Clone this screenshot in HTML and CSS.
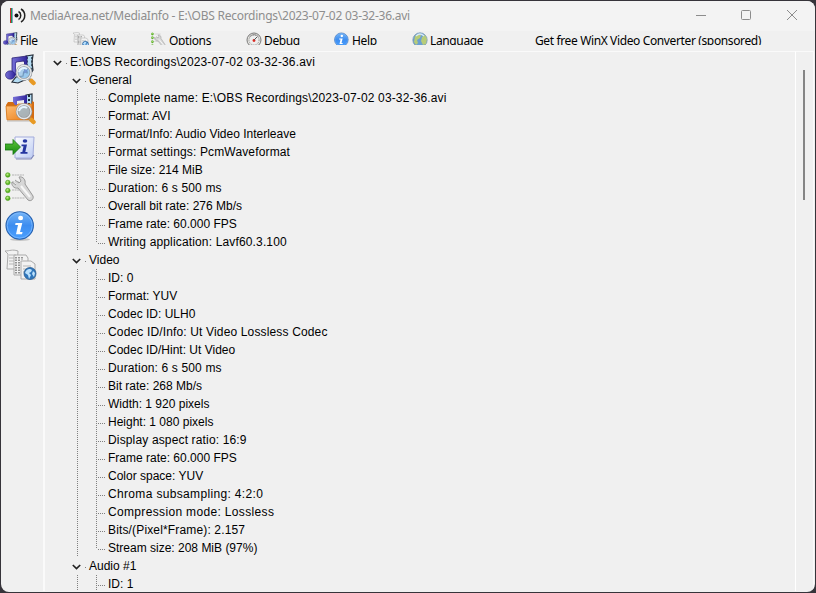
FILE: index.html
```
<!DOCTYPE html>
<html lang="en">
<head>
  <meta charset="UTF-8">
  <title>MediaInfo</title>
  <link rel="stylesheet" href="styles.css">
</head>
<body>

<!-- Shared icons -->
<svg class="defs" width="0" height="0">
  <defs>
    <linearGradient id="blue" x1="0" y1="0" x2="0" y2="1"><stop offset="0" stop-color="#76b4f4"/><stop offset=".5" stop-color="#3d8df0"/><stop offset="1" stop-color="#4aa0ff"/></linearGradient>
    <linearGradient id="purple" x1="0" y1="0" x2="1" y2="0"><stop offset="0" stop-color="#7770d8"/><stop offset="1" stop-color="#30259b"/></linearGradient>
    <linearGradient id="orange" x1="0" y1="0" x2="1" y2="1"><stop offset="0" stop-color="#ffc27c"/><stop offset="1" stop-color="#e87810"/></linearGradient>
    <linearGradient id="green" x1="0" y1="0" x2="0" y2="1"><stop offset="0" stop-color="#5cc53a"/><stop offset="1" stop-color="#178a10"/></linearGradient>
    <linearGradient id="paper" x1="0" y1="0" x2="1" y2="1"><stop offset="0" stop-color="#ffffff"/><stop offset="1" stop-color="#bccbf3"/></linearGradient>
    <radialGradient id="dot" cx=".4" cy=".35"><stop offset="0" stop-color="#c4f08c"/><stop offset="1" stop-color="#4fac18"/></radialGradient>
  </defs>
  <symbol id="note" viewBox="0 0 32 32">
    <path d="M21 2l7-1-1 7 1 8-6 9-9 4-6-1 4-5 7-1z" fill="#b4dcf3" stroke="#26303c" stroke-width="1.2"/>
    <path d="M22 3v17M27 3v14" stroke="#202c3a" stroke-width="1.5" stroke-dasharray="2 1.6"/>
    <path d="M7 4L22 2v16l-3 1V7L11 8v13H7z" fill="url(#purple)" stroke="#292075" stroke-width=".8"/>
    <path d="M11 9l8-1v9l-8 5z" fill="#efefef"/>
    <ellipse cx="5.300" cy="21" rx="4.800" ry="4.200" fill="url(#purple)" stroke="#292075" stroke-width=".6"/>
  </symbol>
  <symbol id="lens" viewBox="0 0 32 32">
    <path d="M24 25l2 2" stroke="#8a8a8a" stroke-width="3"/>
    <path d="M26.500 27l2 2" stroke="#e89a24" stroke-width="4.500" stroke-linecap="round"/>
    <circle cx="19" cy="18.500" r="7" fill="#8fc0ea" fill-opacity=".72" stroke="#8f9499" stroke-width="2.600"/>
    <circle cx="19" cy="18.500" r="7" fill="none" stroke="#e6e8ea" stroke-width="1.400"/>
    <path d="M14 18a5 5 0 0 1 8-3" fill="none" stroke="#e4f4ff" stroke-width="2"/>
  </symbol>
  <symbol id="open-file" viewBox="0 0 32 32">
    <use href="#note" width="32" height="32"/>
    <use href="#lens" width="32" height="32"/>
  </symbol>
  <symbol id="open-folder" viewBox="0 0 32 32">
    <path d="M21 2l6-1v12h-6z" fill="#b4dcf3" stroke="#26303c" stroke-width="1.200"/>
    <path d="M24 2v10" stroke="#202c3a" stroke-width="2" stroke-dasharray="2 2"/>
    <path d="M8 4L22 2v12H8z" fill="url(#purple)"/>
    <path d="M12 8l7-1v5h-7z" fill="#efefef"/>
    <path d="M1 12l2-3h5l2 3h17V8l2 1v18H2z" fill="#d36c12"/>
    <path d="M1 13h10l2-2h14l-1 16H2z" fill="url(#orange)" stroke="#d5761b" stroke-width=".8"/>
    <path d="M2 28h24" stroke="#b9b9b9"/>
    <use href="#lens" width="32" height="32"/>
  </symbol>
  <symbol id="export" viewBox="0 0 32 32">
    <path d="M10 5h19l-1 19-2 2H10z" fill="url(#paper)" stroke="#a3acdc"/>
    <path d="M11 27h15l3-4" fill="none" stroke="#8189b8" stroke-width="1.200"/>
    <ellipse cx="20" cy="9" rx="2.300" ry="1.800" fill="#2536a0"/>
    <path d="M16.500 12.500h5.500L20.300 20h2.200v1.800h-7V20h1.800l1.200-5.800h-2z" fill="#2536a0"/>
    <path d="M0 12h8V7.500L15.500 15 8 22.500V18H0z" fill="url(#green)" stroke="#147313" stroke-width=".8"/>
  </symbol>
  <symbol id="options" viewBox="0 0 32 32">
    <path d="M7 4h12M7 11h7M7 19h8M7 27h13" stroke="#c6c6c6" stroke-width="1.500" stroke-dasharray="2 .6"/>
    <g fill="url(#dot)" stroke="#51a321" stroke-width=".6"><circle cx="2.800" cy="4" r="2.300"/><circle cx="2.800" cy="11.500" r="2.300"/><circle cx="2.800" cy="19.500" r="2.300"/><circle cx="2.800" cy="27.300" r="2.300"/></g>
    <path d="M11 7l4 3 2-2-2-4c4-1 7 3 6 7l8 12c1 3-2 6-5 4L14 15c-4 1-7-3-6-6l4 3" transform="translate(-1 2)" fill="#d7d7d7" stroke="#999" stroke-width="1" stroke-linejoin="round"/>
    <path d="M16 15l9 11" stroke="#f7f7f7" stroke-width="2"/>
  </symbol>
  <symbol id="info" viewBox="0 0 32 32">
    <ellipse cx="15" cy="29.500" rx="10" ry="1.500" fill="#c4c4c4"/>
    <circle cx="14.700" cy="15.500" r="13.700" fill="url(#blue)" stroke="#2862af" stroke-width="1.100"/>
    <circle cx="14.700" cy="15.500" r="12.500" fill="none" stroke="#7cbaff" stroke-width=".8"/>
    <ellipse cx="15.600" cy="8" rx="2.500" ry="2.300" fill="#fff"/>
    <path d="M10.500 13h6.800L15 22h2.600l-.6 2.200h-6L13 15h-2.800z" fill="#fff"/>
  </symbol>
  <symbol id="view" viewBox="0 0 32 32">
    <g fill="#f2f2f2" stroke="#aaa" stroke-width="1"><path d="M0 2c5 0 7-2 13 0l-1 18H2L3 5z"/><path d="M9 6h12l2 3v17H9z"/><path d="M16 12h10l4 3v15H16z"/></g>
    <path d="M4 6h7M4 9h5M4 12h5M4 15h5M18 17h8M18 20h5M18 23h4" stroke="#b5b5b5"/>
    <path d="M11 8v17M14 8v17M17 8v3" stroke="#777" stroke-width="1.500" stroke-dasharray="1.500 1"/>
    <circle cx="25" cy="24.500" r="6" fill="#2f76bb" stroke="#265b91" stroke-width=".8"/>
    <path d="M20 24c1-4 5-5 7-3l-1 2-2 1 2 2-2 4-1-4zM28 22l2 2-1 4-2-3z" fill="#bce1fc"/>
  </symbol>
  <symbol id="debug" viewBox="0 0 16 16">
    <circle cx="8" cy="8" r="7" fill="#e4e3df" stroke="#797979"/>
    <circle cx="8" cy="8" r="5" fill="#eee" stroke="#8d8d8d" stroke-dasharray="1 1"/>
    <path d="M3.500 5A5.500 5.500 0 0 1 12.500 5" fill="none" stroke="#888"/>
    <circle cx="8" cy="8.500" r="1.400" fill="#d92922"/><path d="M8 8l3-3" stroke="#555"/>
  </symbol>
  <symbol id="globe" viewBox="0 0 16 16">
    <circle cx="8" cy="8" r="7.200" fill="#6c9fd0" stroke="#7896b0" stroke-width=".7"/>
    <path d="M3 4l3-2 3 1-1 3-3 2 1 3-2 2-2-3zM10 5l3-2 2 4-1 5-3 1-2-4z" fill="#b7cc78"/>
    <path d="M4 4c3-3 6-2 8 0" fill="none" stroke="#d7e9f7" stroke-width="1.200"/>
  </symbol>
</svg>

<div class="window">
  <header class="titlebar">
    <svg class="logo" viewBox="0 0 17 17">
      <path d="M1.500 1v15" stroke="#d22828"/><path d="M2.500 1v15" stroke="#19a64a"/><path d="M3.300 1v15" stroke="#3459a6" stroke-width=".7"/>
      <circle cx="7.500" cy="8.500" r="2" fill="#111"/>
      <path d="M9.500 4.500c3 1.500 3 6.500 0 8M12 2c5 3 5 10 0 13" fill="none" stroke="#222" stroke-width="1.500"/>
    </svg>
    <span class="title">MediaArea.net/MediaInfo - E:\OBS Recordings\2023-07-02 03-32-36.avi</span>
    <svg class="controls" viewBox="0 0 103 12" fill="none" stroke="#8c8c8c">
      <path d="M0 6.500h10"/><rect x="45.500" y="1.500" width="9" height="9" rx="1"/><path d="M91 1l10 10M101 1L91 11"/>
    </svg>
  </header>

  <nav class="menubar">
    <span class="menu file"><svg><use href="#open-file"/></svg>File</span>
    <span class="menu view"><svg><use href="#view"/></svg>View</span>
    <span class="menu options"><svg><use href="#options"/></svg>Options</span>
    <span class="menu debug"><svg><use href="#debug"/></svg>Debug</span>
    <span class="menu help"><svg><use href="#info"/></svg>Help</span>
    <span class="menu language"><svg><use href="#globe"/></svg>Language</span>
    <span class="menu sponsor">Get free WinX Video Converter (sponsored)</span>
  </nav>

  <div class="content">
    <aside class="toolbar">
      <svg><use href="#open-file"/></svg>
      <svg><use href="#open-folder"/></svg>
      <svg><use href="#export"/></svg>
      <svg><use href="#options"/></svg>
      <svg><use href="#info"/></svg>
      <svg><use href="#view"/></svg>
    </aside>

    <main class="tree">
      <div class="node root"><svg class="chevron" viewBox="0 0 9 6"><path d="M.8 1l3.700 3.500L8.200 1"/></svg><span class="wide">E:\OBS Recordings\2023-07-02 03-32-36.avi</span></div>
      <section>
        <div class="node"><svg class="chevron" viewBox="0 0 9 6"><path d="M.8 1l3.700 3.500L8.200 1"/></svg><span>General</span></div>
        <ul>
          <li class="wide">Complete name: E:\OBS Recordings\2023-07-02 03-32-36.avi</li>
          <li>Format: AVI</li>
          <li>Format/Info: Audio Video Interleave</li>
          <li class="wide">Format settings: PcmWaveformat</li>
          <li>File size: 214 MiB</li>
          <li class="wide">Duration: 6 s 500 ms</li>
          <li>Overall bit rate: 276 Mb/s</li>
          <li>Frame rate: 60.000 FPS</li>
          <li class="wide">Writing application: Lavf60.3.100</li>
        </ul>
      </section>
      <section>
        <div class="node"><svg class="chevron" viewBox="0 0 9 6"><path d="M.8 1l3.700 3.500L8.200 1"/></svg><span>Video</span></div>
        <ul>
          <li>ID: 0</li>
          <li>Format: YUV</li>
          <li>Codec ID: ULH0</li>
          <li class="wide">Codec ID/Info: Ut Video Lossless Codec</li>
          <li>Codec ID/Hint: Ut Video</li>
          <li class="wide">Duration: 6 s 500 ms</li>
          <li>Bit rate: 268 Mb/s</li>
          <li>Width: 1 920 pixels</li>
          <li>Height: 1 080 pixels</li>
          <li class="wide">Display aspect ratio: 16:9</li>
          <li>Frame rate: 60.000 FPS</li>
          <li>Color space: YUV</li>
          <li class="wider">Chroma subsampling: 4:2:0</li>
          <li class="wider">Compression mode: Lossless</li>
          <li class="wide">Bits/(Pixel*Frame): 2.157</li>
          <li>Stream size: 208 MiB (97%)</li>
        </ul>
      </section>
      <section>
        <div class="node"><svg class="chevron" viewBox="0 0 9 6"><path d="M.8 1l3.700 3.500L8.200 1"/></svg><span>Audio #1</span></div>
        <ul class="more">
          <li>ID: 1</li>
        </ul>
      </section>
    </main>
    <div class="scrollbar"><div class="thumb"></div></div>
  </div>
</div>

</body>
</html>
```
FILE: styles.css
```
* {
  box-sizing: border-box;
}

body {
  margin: 0;
  padding: 1px;
  height: 593px;
  overflow: hidden;
  background: #36343a;
  font-family: "Liberation Sans", Arial, sans-serif;
  font-size: 12px;
  color: #000;
}

.defs {
  display: block;
}

.window {
  display: flex;
  flex-direction: column;
  height: 591px;
  overflow: hidden;
  border-radius: 8px;
  background: #f0f0f0;
}

.titlebar {
  display: flex;
  align-items: center;
  flex: none;
  height: 30px;
  padding: 0 16px 2px 8px;
  background: #f3f3f3;
  color: #8e8e8e;
  font-family: "Noto Sans", sans-serif;
}

.logo {
  width: 17px;
  height: 17px;
  margin-right: 4px;
}

.title {
  white-space: nowrap;
  letter-spacing: -0.26px;
}

.controls {
  width: 103px;
  height: 12px;
  margin-left: auto;
}

.menubar {
  display: flex;
  flex: none;
  height: 14px;
  overflow: hidden;
  padding-left: 2px;
  font-family: "Noto Sans", sans-serif;
}

.menu {
  display: flex;
  flex: none;
  height: 20px;
  line-height: 20px;
  gap: 2px;
  white-space: nowrap;
  letter-spacing: -0.37px;
}

.menu svg {
  width: 16px;
  height: 16px;
  margin-top: 1px;
}

.file { width: 70px; gap: 1px; }
.view { width: 78px; }
.options { width: 95px; }
.debug { width: 88px; }
.help { width: 78px; }
.language { width: 123px; }

.content {
  display: flex;
  flex: none;
  height: 540px;
  margin-top: 6px;
}

.toolbar {
  display: flex;
  flex-direction: column;
  gap: 7px;
  width: 42px;
  padding: 3px 0 0 4px;
}

.toolbar svg {
  width: 32px;
  height: 32px;
}

.tree {
  flex: 1;
  padding: 1px 0 0 10px;
  overflow: hidden;
  border-top: 1px solid #fafafa;
  border-left: 2px solid #fafafa;
}

.node {
  display: flex;
  align-items: center;
  height: 18px;
  line-height: 18px;
  padding-left: 17px;
}

.node.root {
  padding-left: 0;
  margin-left: -2px;
}

.chevron {
  width: 9px;
  height: 6px;
  margin: 2px 8px 0 0;
  fill: none;
  stroke: #222;
  stroke-width: 1.7;
}

.node span {
  position: relative;
}

/* one dot between the arrow and its label */
.node span::before {
  content: "";
  position: absolute;
  left: -4px;
  top: 10px;
  width: 1px;
  height: 1px;
  background: #808080;
}

section {
  background: repeating-linear-gradient(to bottom, #808080 0 1px, transparent 1px 2px) 22px 18px / 1px calc(100% - 18px) no-repeat;
}

ul {
  list-style: none;
  margin: 0;
  padding: 0 0 0 41px;
  background: repeating-linear-gradient(to bottom, #808080 0 1px, transparent 1px 2px) 41px 0 / 1px calc(100% - 8px) no-repeat;
}

ul.more {
  background-size: 1px 100%;
}

li {
  height: 18px;
  line-height: 18px;
  padding-left: 12px;
  white-space: nowrap;
  background: repeating-linear-gradient(to right, #808080 0 1px, transparent 1px 2px) 2px 10px / 7px 1px no-repeat;
}

.wide {
  letter-spacing: 0.15px;
}

.wider {
  letter-spacing: 0.34px;
}

.scrollbar {
  width: 19px;
  margin-right: 1px;
  padding: 18px 0 0 7px;
  border-top: 1px solid #fafafa;
  border-left: 1px solid #fff;
  border-right: 1px solid #fafafa;
}

.thumb {
  width: 2px;
  height: 130px;
  background: #858585;
}
```
